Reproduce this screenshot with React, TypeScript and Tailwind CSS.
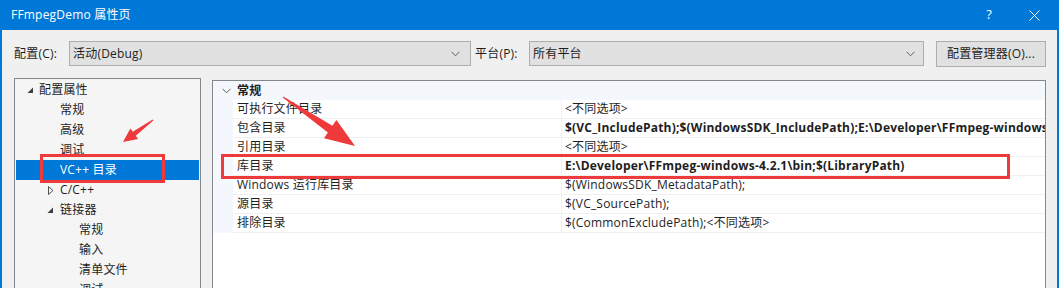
import React from 'react'

const FONT = "font-['Open_Sans','Noto_Sans_CJK_SC',sans-serif]"

function Arrow({ tail, tip, headLen, headW, tailW, neckW }: { tail: [number, number]; tip: [number, number]; headLen: number; headW: number; tailW: number; neckW: number }) {
  const dx = tip[0] - tail[0]
  const dy = tip[1] - tail[1]
  const len = Math.hypot(dx, dy)
  const ux = dx / len
  const uy = dy / len
  const nx = -uy
  const ny = ux
  const bx = tip[0] - ux * headLen
  const by = tip[1] - uy * headLen
  const p = (x: number, y: number) => `${x.toFixed(1)},${y.toFixed(1)}`
  const pts = [
    p(tail[0] + nx * tailW / 2, tail[1] + ny * tailW / 2),
    p(bx + nx * neckW / 2, by + ny * neckW / 2),
    p(bx + nx * headW / 2, by + ny * headW / 2),
    p(tip[0], tip[1]),
    p(bx - nx * headW / 2, by - ny * headW / 2),
    p(bx - nx * neckW / 2, by - ny * neckW / 2),
    p(tail[0] - nx * tailW / 2, tail[1] - ny * tailW / 2),
  ].join(' ')
  return <polygon points={pts} fill="#ee3a3a" />
}

function Chevron() {
  return (
    <svg width="9" height="6" viewBox="0 0 9 6" className="shrink-0">
      <polyline points="0.5,0.8 4.5,4.8 8.5,0.8" fill="none" stroke="#606060" strokeWidth="1" />
    </svg>
  )
}

function Filled() {
  return (
    <svg width="7" height="7" viewBox="0 0 7 7" className="shrink-0">
      <polygon points="6,0.5 6,6 0.5,6" fill="#404040" />
    </svg>
  )
}

function Hollow() {
  return (
    <svg width="6" height="9" viewBox="0 0 6 9" className="shrink-0">
      <polygon points="0.5,0.5 5,4.5 0.5,8.5" fill="none" stroke="#505050" strokeWidth="1" />
    </svg>
  )
}

const tree: { label: string; level: number; icon?: 'filled' | 'hollow'; selected?: boolean }[] = [
  { label: '配置属性', level: 0, icon: 'filled' },
  { label: '常规', level: 1 },
  { label: '高级', level: 1 },
  { label: '调试', level: 1 },
  { label: 'VC++ 目录', level: 1, selected: true },
  { label: 'C/C++', level: 1, icon: 'hollow' },
  { label: '链接器', level: 1, icon: 'filled' },
  { label: '常规', level: 2 },
  { label: '输入', level: 2 },
  { label: '清单文件', level: 2 },
  { label: '调试', level: 2 },
]

const props: { name: string; value: string; bold?: boolean }[] = [
  { name: '可执行文件目录', value: '<不同选项>' },
  { name: '包含目录', value: '$(VC_IncludePath);$(WindowsSDK_IncludePath);E:\\Developer\\FFmpeg-windows-4.2.1\\include;$(IncludePath)', bold: true },
  { name: '引用目录', value: '<不同选项>' },
  { name: '库目录', value: 'E:\\Developer\\FFmpeg-windows-4.2.1\\bin;$(LibraryPath)', bold: true },
  { name: 'Windows 运行库目录', value: '$(WindowsSDK_MetadataPath);' },
  { name: '源目录', value: '$(VC_SourcePath);' },
  { name: '排除目录', value: '$(CommonExcludePath);<不同选项>' },
]

export default function App() {
  return (
    <div className={`relative w-[1059px] h-[288px] overflow-hidden bg-[#f0f0f0] text-[12px] tracking-[0.2px] text-[#1e1e1e] ${FONT}`}>
      {/* title bar */}
      <div className="h-[30px] bg-[#0078d7] flex items-center text-white">
        <span className="pl-[11px] text-[12px]">FFmpegDemo 属性页</span>
        <span className="ml-auto mr-[37px] text-[13px]">?</span>
        <svg width="11" height="11" viewBox="0 0 11 11" className="mr-[19px]">
          <path d="M0.5 0.5 L10.5 10.5 M10.5 0.5 L0.5 10.5" stroke="#fff" strokeWidth="1" />
        </svg>
      </div>

      <div className="h-[258px] border-l-2 border-r-2 border-[#0078d7] flex flex-col">
        {/* config row */}
        <div className="mt-[11px] h-[25px] flex items-center">
          <span className="ml-[12px] w-[55px]">配置(C):</span>
          <div className="w-[402px] h-[25px] bg-[#e1e1e1] border border-[#adadad] flex items-center pl-[3px] pr-[10px]">
            <span>活动(Debug)</span>
            <span className="ml-auto"><Chevron /></span>
          </div>
          <span className="ml-[4px] w-[54px]">平台(P):</span>
          <div className="w-[395px] h-[25px] bg-[#e1e1e1] border border-[#adadad] flex items-center pl-[3px] pr-[8px]">
            <span>所有平台</span>
            <span className="ml-auto"><Chevron /></span>
          </div>
          <div className="ml-[12px] w-[110px] h-[26px] bg-[#e1e1e1] border border-[#adadad] flex items-center justify-center">
            配置管理器(O)...
          </div>
        </div>

        {/* main area */}
        <div className="flex flex-1 mt-[12px]">
          <div className="ml-[12px] w-[187px] h-[220px] border border-[#828790] bg-[#f5f5f5] pt-[1px] px-[1px]">
            {tree.map((t, i) => (
              <div
                key={i}
                className={`h-[20px] flex items-center ${t.selected ? 'bg-[#0078d7] text-white' : ''}`}
              >
                <div className={`${t.level === 0 ? 'w-[24px]' : t.level === 1 ? 'w-[44px]' : 'w-[63px]'} flex justify-end pr-[6px]`}>
                  {t.icon === 'filled' ? <Filled /> : t.icon === 'hollow' ? <Hollow /> : null}
                </div>
                <span className={t.level === 0 ? 'ml-[-1px]' : ''}>{t.label}</span>
              </div>
            ))}
          </div>

          <div className="ml-[11px] mt-[2px] w-[834px] h-[220px] border border-[#828790] bg-white overflow-hidden">
            <div className="h-[19px] bg-[#f4f7fc] flex items-center">
              <div className="w-[24px] flex justify-center pl-[2px]"><Chevron /></div>
              <span className="font-bold">常规</span>
            </div>
            {props.map((p, i) => (
              <div key={i} className="h-[19px] flex">
                <div className="w-[20px] bg-[#f4f7fc]" />
                <div className="w-[328px] border-b border-[#f0f0f0] flex items-center pl-[4px] whitespace-nowrap">{p.name}</div>
                <div className="flex-1 border-b border-l border-[#f0f0f0] flex items-center pl-[3px] whitespace-nowrap overflow-hidden">
                  <span className={p.bold ? 'font-bold' : ''}>{p.value}</span>
                </div>
              </div>
            ))}
          </div>
        </div>
      </div>

      {/* annotations */}
      <div className="absolute left-[40px] top-[154px] w-[125px] h-[29px] border-[3px] border-[#ee3a3a]" />
      <div className="absolute left-[221px] top-[154px] w-[789px] h-[25px] border-[3px] border-[#ee3a3a]" />
      <svg className="absolute left-0 top-0" width="1059" height="288">
        <Arrow tail={[153, 120]} tip={[123, 142]} headLen={14} headW={13} tailW={1} neckW={5} />
        <Arrow tail={[283, 97]} tip={[355, 146]} headLen={30} headW={22} tailW={1} neckW={8} />
      </svg>
    </div>
  )
}
